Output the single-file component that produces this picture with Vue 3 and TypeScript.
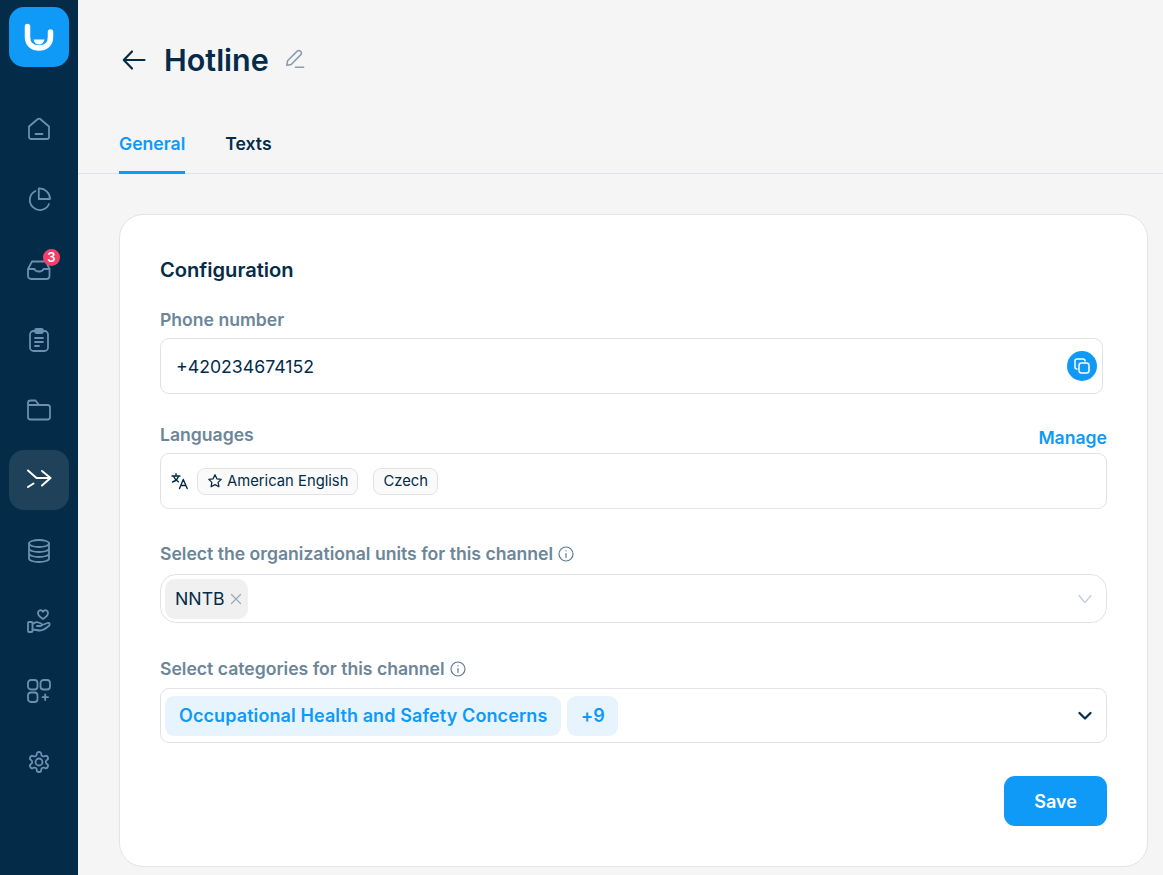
<script setup lang="ts">
// Hotline channel settings: dark icon rail on the left, page header, tabs and config card.
interface NavItem {
  id: string
  active?: boolean
  badge?: number
}

const navItems: NavItem[] = [
  { id: 'home' },
  { id: 'stats' },
  { id: 'inbox', badge: 3 },
  { id: 'tasks' },
  { id: 'folder' },
  { id: 'channels', active: true },
  { id: 'data' },
  { id: 'care' },
  { id: 'apps' },
  { id: 'settings' },
]
</script>

<template>
  <div class="layout">
    <aside class="rail">
      <div class="logo">
        <svg width="30" height="30" viewBox="0 0 30 30" fill="none">
          <path d="M3.500 4.500V15c0 7 5 11 11.500 11s11.500-4 11.500-11v-5" stroke="#fff" stroke-width="5.500" stroke-linecap="round" />
          <path d="M9.500 17.500h11c-.5 3-2.500 5-5.500 5s-5-2-5.500-5z" fill="#fff" />
        </svg>
      </div>
      <nav class="nav">
        <a v-for="item in navItems" :key="item.id" class="nav-item" :class="{ 'nav-item--active': item.active }">
          <svg width="26" height="26" viewBox="0 0 26 26" fill="none" stroke="currentColor" stroke-width="1.800" stroke-linecap="round" stroke-linejoin="round">
            <template v-if="item.id === 'home'">
              <path d="M3 10.500 11.800 3a2 2 0 0 1 2.400 0L23 10.500V21a2 2 0 0 1-2 2H5a2 2 0 0 1-2-2z" />
              <path d="M9.500 18h7" />
            </template>
            <template v-else-if="item.id === 'stats'">
              <path d="M9.500 5A10 10 0 1 0 23 18" />
              <path d="M12.800 2.500V13H24A10.500 10.500 0 0 0 12.800 2.500z" />
            </template>
            <template v-else-if="item.id === 'inbox'">
              <path d="M6 4.500h14l3.500 7.500v7a3 3 0 0 1-3 3H5a3 3 0 0 1-3-3v-7z" />
              <path d="M2.500 12h6c.5 1.700 2 2.500 4.500 2.500s4-.8 4.500-2.500h6" />
            </template>
            <template v-else-if="item.id === 'tasks'">
              <rect x="4" y="4" width="18" height="20" rx="3.500" />
              <rect x="9" y="2" width="8" height="4" rx="1.500" />
              <path d="M9 11h8M9 15h8M9 19h4" />
            </template>
            <template v-else-if="item.id === 'folder'">
              <path d="M2 6a2.500 2.500 0 0 1 2.500-2.500h5L13 8h9a2.500 2.500 0 0 1 2 2.500V20a2.500 2.500 0 0 1-2.500 2.500h-17A2.500 2.500 0 0 1 2 20z" />
              <path d="M2.500 8H13" />
            </template>
            <template v-else-if="item.id === 'channels'">
              <path d="M2 3.500 10.500 11h14M16 4l8.500 7-8.500 7.500M2 20l5.500-3.500" stroke-width="2" />
            </template>
            <template v-else-if="item.id === 'data'">
              <ellipse cx="13" cy="5.500" rx="10" ry="3.500" />
              <path d="M3 5.500v15c0 2 4.500 3.500 10 3.500s10-1.500 10-3.500v-15M3 10.500c0 2 4.500 3.500 10 3.500s10-1.500 10-3.500M3 15.500c0 2 4.500 3.500 10 3.500s10-1.500 10-3.500" />
            </template>
            <template v-else-if="item.id === 'care'">
              <path d="M17 11c-2.400-1.500-5-3.500-5-6 0-3 3.600-3.700 5-1.300C18.400 1.300 22 2 22 5c0 2.500-2.600 4.500-5 6z" />
              <rect x="2" y="14" width="4.500" height="10" rx="1" />
              <path d="M6.500 16c2-1.500 4-2.500 6-1.500l2.500 1c1.500.6 1 2.500-.5 2.500H11m4-.5 6.500-2.500c2-.6 3 1.500 1.500 2.800-2.500 2.200-5.500 4.700-9 4.700-2.500 0-5-1-7.500-1" />
            </template>
            <template v-else-if="item.id === 'apps'">
              <rect x="2" y="2" width="9.500" height="9.500" rx="3" />
              <rect x="14.500" y="2" width="9.500" height="9.500" rx="3" />
              <rect x="2" y="14.500" width="9.500" height="9.500" rx="3" />
              <path d="M19.200 16.500v5.500M16.500 19.200H22" />
            </template>
            <template v-else>
              <path transform="translate(1 1)" d="M12.220 2h-.44a2 2 0 0 0-2 2v.18a2 2 0 0 1-1 1.730l-.43.25a2 2 0 0 1-2 0l-.15-.08a2 2 0 0 0-2.730.73l-.22.38a2 2 0 0 0 .73 2.730l.15.1a2 2 0 0 1 1 1.720v.51a2 2 0 0 1-1 1.740l-.15.09a2 2 0 0 0-.73 2.730l.22.38a2 2 0 0 0 2.730.73l.15-.08a2 2 0 0 1 2 0l.43.25a2 2 0 0 1 1 1.730V20a2 2 0 0 0 2 2h.44a2 2 0 0 0 2-2v-.18a2 2 0 0 1 1-1.730l.43-.25a2 2 0 0 1 2 0l.15.08a2 2 0 0 0 2.730-.73l.22-.39a2 2 0 0 0-.73-2.730l-.15-.08a2 2 0 0 1-1-1.740v-.5a2 2 0 0 1 1-1.740l.15-.09a2 2 0 0 0 .73-2.730l-.22-.38a2 2 0 0 0-2.730-.73l-.15.08a2 2 0 0 1-2 0l-.43-.25a2 2 0 0 1-1-1.730V4a2 2 0 0 0-2-2z" />
              <circle cx="13" cy="13" r="3.500" />
            </template>
          </svg>
          <span v-if="item.badge" class="badge">{{ item.badge }}</span>
        </a>
      </nav>
    </aside>

    <main class="main">
      <header class="page-head">
        <svg class="back" width="26" height="26" viewBox="0 0 26 26" fill="none" stroke="#042c48" stroke-width="2.200" stroke-linecap="round" stroke-linejoin="round">
          <path d="M23.500 13H3M11 4.500 2.800 13l8.200 8.500" />
        </svg>
        <h1 class="title">Hotline</h1>
        <svg class="pencil" width="20" height="20" viewBox="0 0 22 22" fill="none" stroke="#8a9cab" stroke-width="1.700" stroke-linecap="round" stroke-linejoin="round">
          <path d="M2 18l.8-5L13.500 2.300a2.400 2.400 0 0 1 3.400 0l.5.500a2.400 2.400 0 0 1 0 3.400L6.800 17z" />
          <path d="M11.500 20h9" />
        </svg>
      </header>

      <div class="tabs">
        <a class="tab tab--active">General</a>
        <a class="tab">Texts</a>
      </div>

      <section class="card">
        <h2 class="card-title">Configuration</h2>

        <div class="field field--phone">
          <label class="label">Phone number</label>
          <div class="box box--phone">
            <span>+420234674152</span>
            <span class="copy">
              <svg width="18" height="18" viewBox="0 0 18 18" fill="none" stroke="#fff" stroke-width="1.500" stroke-linejoin="round">
                <path d="M4.500 12H4a2 2 0 0 1-2-2V4a2 2 0 0 1 2-2h6a2 2 0 0 1 2 2v.500" />
                <rect x="6" y="6" width="10" height="10" rx="2.500" />
              </svg>
            </span>
          </div>
        </div>

        <div class="field field--languages">
          <div class="label-row">
            <label class="label">Languages</label>
            <a class="manage">Manage</a>
          </div>
          <div class="box box--languages">
            <svg class="translate" width="18" height="18" viewBox="0 0 18 18" fill="none" stroke="#042c48" stroke-width="1.400" stroke-linecap="round" stroke-linejoin="round">
              <path d="M1 4h8M5 1.800V4M7.500 4C7 6.500 4.500 9 1.500 10M2.800 4.800c.8 2 2.800 4 4.700 5" />
              <path d="m8.500 16.500 3.800-9 3.900 9M10 13.500h4.800" />
            </svg>
            <span class="lang">
              <svg width="16" height="16" viewBox="0 0 16 16" fill="none" stroke="#042c48" stroke-width="1.300" stroke-linejoin="round">
                <path d="m8 1.800 1.900 4 4.300.6-3.100 3 .8 4.300L8 11.600l-3.900 2.100.8-4.300-3.100-3 4.300-.6z" />
              </svg>
              American English
            </span>
            <span class="lang">Czech</span>
          </div>
        </div>

        <div class="field field--units">
          <label class="label">
            Select the organizational units for this channel
            <svg class="info" width="16" height="16" viewBox="0 0 16 16" fill="none" stroke="#5f7b90" stroke-width="1.200" stroke-linecap="round">
              <circle cx="8" cy="8" r="7" />
              <path d="M8 7.500V11.500M8 4.700v.1" />
            </svg>
          </label>
          <div class="box box--units">
            <span class="unit">
              NNTB
              <svg width="12" height="12" viewBox="0 0 12 12" fill="none" stroke="#9aabb8" stroke-width="1.200" stroke-linecap="round">
                <path d="m1.500 1.500 9 9M10.500 1.500l-9 9" />
              </svg>
            </span>
            <svg class="chevron" width="14" height="10" viewBox="0 0 14 10" fill="none" stroke="#c3ced8" stroke-width="1.300" stroke-linecap="round" stroke-linejoin="round">
              <path d="m1 1.500 6 7 6-7" />
            </svg>
          </div>
        </div>

        <div class="field field--categories">
          <label class="label">
            Select categories for this channel
            <svg class="info" width="16" height="16" viewBox="0 0 16 16" fill="none" stroke="#5f7b90" stroke-width="1.200" stroke-linecap="round">
              <circle cx="8" cy="8" r="7" />
              <path d="M8 7.500V11.500M8 4.700v.1" />
            </svg>
          </label>
          <div class="box box--categories">
            <span class="chip">Occupational Health and Safety Concerns</span>
            <span class="chip chip--more">+9</span>
            <svg class="chevron" width="14" height="10" viewBox="0 0 14 10" fill="none" stroke="#042c48" stroke-width="2.200" stroke-linecap="round" stroke-linejoin="round">
              <path d="m1.500 2 5.500 5.500L12.500 2" />
            </svg>
          </div>
        </div>

        <div class="actions">
          <button class="save" type="button">Save</button>
        </div>
      </section>
    </main>
  </div>
</template>

<style scoped>
.layout {
  display: flex;
  height: 875px;
  overflow: hidden;
  background-color: #f5f5f6;
  color: #042c48;
  font-family: Inter, "Liberation Sans", sans-serif;
}

.rail {
  flex: 0 0 78px;
  box-sizing: border-box;
  padding: 7px 9px 0;
  background-color: #042c48;
}

.logo {
  display: flex;
  align-items: center;
  justify-content: center;
  width: 60px;
  height: 60px;
  margin-bottom: 32px;
  border-radius: 15px;
  background-color: #0f9af8;
}

.nav {
  display: flex;
  flex-direction: column;
  gap: 10.300px;
}

.nav-item {
  position: relative;
  display: flex;
  align-items: center;
  justify-content: center;
  height: 60px;
  border-radius: 15px;
  color: #6d8fb0;
}

.nav-item--active {
  background-color: #1f4159;
  color: #fff;
}

.badge {
  position: absolute;
  top: 9px;
  left: 34px;
  width: 17px;
  height: 17px;
  border-radius: 50%;
  background-color: #f43f6b;
  color: #fff;
  font-size: 13px;
  font-weight: 600;
  line-height: 17px;
  text-align: center;
}

.main {
  flex: 1;
  min-width: 0;
}

.page-head {
  display: flex;
  align-items: center;
  height: 42px;
  padding: 39px 0 1px 43px;
}

.back {
  width: 26px;
  margin-right: 17px;
}

.title {
  margin: 0 16px 0 0;
  font-size: 30.500px;
  font-weight: 600;
  line-height: 42px;
}

.pencil {
  margin-top: -3px;
}

.tabs {
  display: flex;
  gap: 40px;
  box-sizing: border-box;
  height: 92px;
  padding: 39px 0 0 41px;
  border-bottom: 1px solid #dfe3ec;
}

.tab {
  box-sizing: border-box;
  height: 53px;
  padding-top: 11px;
  font-size: 17.600px;
  font-weight: 600;
  line-height: 24px;
}

.tab--active {
  border-bottom: 3px solid #0f9af8;
  color: #0f9af8;
}

.card {
  box-sizing: border-box;
  width: 1029px;
  height: 653px;
  margin: 40px 0 0 41px;
  padding: 41px 40px 0;
  border: 1px solid #e1e4e9;
  border-radius: 24px;
  background-color: #fff;
}

.card-title {
  margin: 0;
  font-size: 20.100px;
  font-weight: 600;
  line-height: 28px;
}

.field--phone {
  margin-top: 24px;
}

.field--languages {
  margin-top: 29px;
}

.field--units {
  margin-top: 33px;
}

.field--categories {
  margin-top: 34px;
}

.label {
  display: flex;
  align-items: center;
  gap: 5px;
  height: 24px;
  font-size: 17.600px;
  font-weight: 600;
  line-height: 24px;
  color: #6c8699;
}

.label-row {
  display: flex;
  justify-content: space-between;
}

.manage {
  padding-top: 3px;
  color: #0f9af8;
  font-size: 17.600px;
  font-weight: 600;
  line-height: 24px;
}

.box {
  position: relative;
  display: flex;
  align-items: center;
  box-sizing: border-box;
  width: 947px;
  border: 1px solid #dfe3e8;
  background-color: #fff;
}

.box--phone {
  width: 943px;
  height: 56px;
  margin-top: 6px;
  padding-left: 15px;
  border-radius: 9px;
  font-size: 17.700px;
}

.copy {
  position: absolute;
  top: 12px;
  right: 5px;
  display: flex;
  align-items: center;
  justify-content: center;
  width: 30px;
  height: 30px;
  border-radius: 50%;
  background-color: #0f9af8;
}

.box--languages {
  gap: 15px;
  height: 56px;
  margin-top: 3px;
  padding-left: 10px;
  border-radius: 9px;
}

.translate {
  margin-right: -7px;
}

.lang {
  display: flex;
  align-items: center;
  gap: 4px;
  box-sizing: border-box;
  height: 27px;
  padding: 0 9px;
  border: 1px solid #dfe3e8;
  border-radius: 8px;
  background-color: #fafafa;
  font-size: 14.800px;
}

.box--units {
  height: 49px;
  margin-top: 8px;
  padding-left: 4px;
  border-radius: 16px;
}

.unit {
  display: flex;
  align-items: center;
  gap: 5px;
  height: 40px;
  padding: 0 6px 0 10px;
  border-radius: 10px;
  background-color: #f0f0f0;
  font-size: 17.700px;
}

.chevron {
  position: absolute;
  top: 50%;
  right: 14px;
  transform: translateY(-50%);
}

.box--categories {
  gap: 6px;
  height: 55px;
  margin-top: 7px;
  padding-left: 4px;
  border-radius: 9px;
}

.chip {
  height: 40px;
  padding: 0 14px;
  border-radius: 9px;
  background-color: #e7f4fe;
  color: #0f9af8;
  font-size: 18px;
  font-weight: 600;
  letter-spacing: 0.100px;
  line-height: 40px;
}

.chip--more {
  padding: 0 13.500px;
}

.actions {
  display: flex;
  justify-content: flex-end;
  width: 947px;
  margin-top: 33px;
}

.save {
  width: 103px;
  height: 50px;
  border: none;
  border-radius: 11px;
  background-color: #0f9af8;
  color: #fff;
  font-family: inherit;
  font-size: 18px;
  font-weight: 600;
}
</style>
